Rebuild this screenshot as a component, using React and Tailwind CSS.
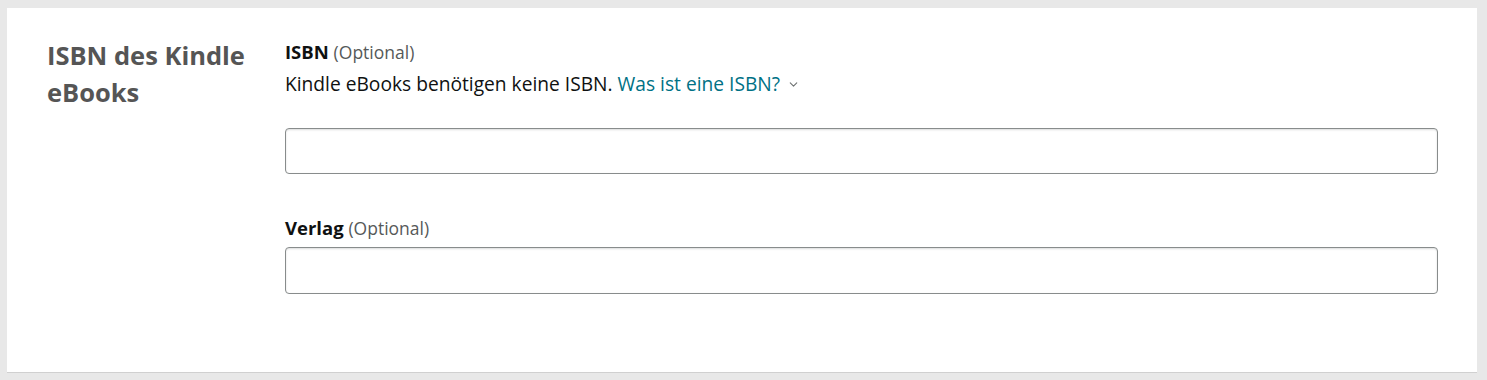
import { ChevronDown } from 'lucide-react'

const font = { fontFamily: '"Open Sans", "Liberation Sans", sans-serif' }

function Field({ label, children }) {
  return (
    <div>
      <div className="text-[18.5px] leading-[24px] text-[#0f1111]">
        <span className="font-bold">{label}</span>{' '}
        <span className="text-[17.5px] text-[#565959]">(Optional)</span>
      </div>
      {children}
    </div>
  )
}

export default function App() {
  return (
    <div className="min-h-[380px] bg-[#e8e8e8] pt-[8px] pl-[7px] pr-[10px]" style={font}>
      <div className="flex h-[365px] bg-white border-b border-[#d0d0d0] pt-[21px] pl-[40px] pr-[39px]">
        <div className="w-[238px] shrink-0 pt-[8px]">
          <h2 className="text-[25.5px] leading-[37px] font-bold text-[#555555]">ISBN des Kindle eBooks</h2>
        </div>
        <div className="flex-1 pt-[11px]">
          <Field label="ISBN">
            <p className="mt-[8px] text-[19.2px] leading-[24px] text-[#0f1111]">
              Kindle eBooks benötigen keine ISBN.{' '}
              <a className="text-[#007185] inline-flex items-center gap-[7px] cursor-pointer">
                Was ist eine ISBN?
                <ChevronDown size={13} strokeWidth={2} className="text-[#6f7373]" />
              </a>
            </p>
            <input className="mt-[32px] block w-full h-[46px] rounded-[4px] border border-[#888c8c] shadow-[inset_0_1px_2px_rgba(15,17,17,0.15)] px-3 outline-none" />
          </Field>
          <div className="mt-[42px]">
            <Field label="Verlag">
              <input className="mt-[7px] block w-full h-[47px] rounded-[4px] border border-[#888c8c] shadow-[inset_0_1px_2px_rgba(15,17,17,0.15)] px-3 outline-none" />
            </Field>
          </div>
        </div>
      </div>
    </div>
  )
}
